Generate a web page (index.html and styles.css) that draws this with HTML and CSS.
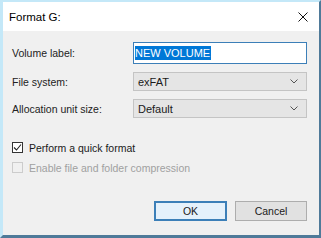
FILE: index.html
```html
<!DOCTYPE html>
<html lang="en">
<head>
    <meta charset="UTF-8">
    <title>Format G:</title>
    <link rel="stylesheet" href="styles.css">
</head>
<body>
    <div class="window">
        <div class="titlebar">
            <span class="title">Format G:</span>
            <svg class="close" width="10" height="10" viewBox="0 0 10 10">
                <path d="M0.5 0.5 L9.5 9.5 M9.5 0.5 L0.5 9.5" stroke="#111" stroke-width="1" fill="none"/>
            </svg>
        </div>

        <div class="content">
            <div class="form-grid">
                <label class="field-label">Volume label:</label>
                <div class="text-input"><span class="selected">NEW VOLUME</span></div>

                <label class="field-label">File system:</label>
                <div class="combo">
                    <span>exFAT</span>
                    <svg class="chevron" width="8" height="5" viewBox="0 0 8 5">
                        <path d="M0.5 0.5 L4 4 L7.5 0.5" stroke="#555" stroke-width="1" fill="none"/>
                    </svg>
                </div>

                <label class="field-label">Allocation unit size:</label>
                <div class="combo">
                    <span>Default</span>
                    <svg class="chevron" width="8" height="5" viewBox="0 0 8 5">
                        <path d="M0.5 0.5 L4 4 L7.5 0.5" stroke="#555" stroke-width="1" fill="none"/>
                    </svg>
                </div>
            </div>

            <div class="options">
                <div class="check-row">
                    <span class="checkbox checked">
                        <svg width="9" height="9" viewBox="0 0 9 9">
                            <path d="M1 4.5 L3.5 7 L8 1.5" stroke="#222" stroke-width="1.1" fill="none"/>
                        </svg>
                    </span>
                    <span>Perform a quick format</span>
                </div>
                <div class="check-row disabled">
                    <span class="checkbox"></span>
                    <span>Enable file and folder compression</span>
                </div>
            </div>

            <div class="buttons">
                <div class="btn btn-default">OK</div>
                <div class="btn">Cancel</div>
            </div>
        </div>
    </div>
</body>
</html>
```

FILE: styles.css
```css
:root {
    --face-color: #f0f0f0;
    --frame-color: #4f7a99;
    --glow-color: #c4e8f8;
    --focus-color: #3c7fb8;
    --select-color: #0078d7;
    --text-color: #1a1a1a;
}

* {
    margin: 0;
    padding: 0;
    box-sizing: border-box;
}

body {
    font-family: 'Liberation Sans', Arial, sans-serif;
    font-size: 10.5px;
    color: var(--text-color);
    background: #fff;
}

.window {
    width: 321px;
    height: 238px;
    display: flex;
    flex-direction: column;
    border-top: 2px solid var(--glow-color);
    border-left: 3px solid var(--glow-color);
    border-right: 2px solid var(--frame-color);
    border-bottom: 3px solid var(--frame-color);
}

.titlebar {
    height: 29px;
    background: #fff;
    display: flex;
    align-items: center;
    justify-content: space-between;
    padding: 0 11px 0 6px;
}

.title {
    font-size: 11.5px;
    color: #000;
}

.content {
    flex: 1;
    background: var(--face-color);
    display: flex;
    flex-direction: column;
    padding: 11px 12px 14px 9px;
}

.form-grid {
    display: grid;
    grid-template-columns: 121px 174px;
    row-gap: 8px;
    align-items: center;
}

.field-label {
    color: #222;
}

.text-input {
    height: 22px;
    background: #fff;
    border: 1px solid var(--focus-color);
    display: flex;
    align-items: center;
    padding-left: 1px;
}

.selected {
    background: var(--select-color);
    color: #fff;
    font-size: 11px;
    line-height: 14px;
    padding-right: 1px;
}

.combo {
    height: 19px;
    background: #e5e5e5;
    border: 1px solid #c4c4c4;
    display: flex;
    align-items: center;
    justify-content: space-between;
    padding: 0 8px 0 4px;
    font-size: 11px;
}

.chevron {
    display: block;
}

.options {
    margin-top: 24px;
    display: flex;
    flex-direction: column;
    gap: 9px;
}

.check-row {
    display: flex;
    align-items: center;
    gap: 6px;
    height: 11px;
}

.checkbox {
    width: 11px;
    height: 11px;
    border: 1px solid #333;
    background: #fff;
    display: flex;
    align-items: center;
    justify-content: center;
}

.check-row.disabled {
    color: #a0a0a0;
}

.check-row.disabled .checkbox {
    border-color: #cccccc;
    background: var(--face-color);
}

.buttons {
    margin-top: auto;
    display: flex;
    justify-content: flex-end;
    gap: 8px;
}

.btn {
    width: 72px;
    height: 20px;
    background: #e1e1e1;
    border: 1px solid #adadad;
    display: flex;
    align-items: center;
    justify-content: center;
}

.btn-default {
    width: 73px;
    background: #e5f1fb;
    border: 2px solid var(--focus-color);
}
```
